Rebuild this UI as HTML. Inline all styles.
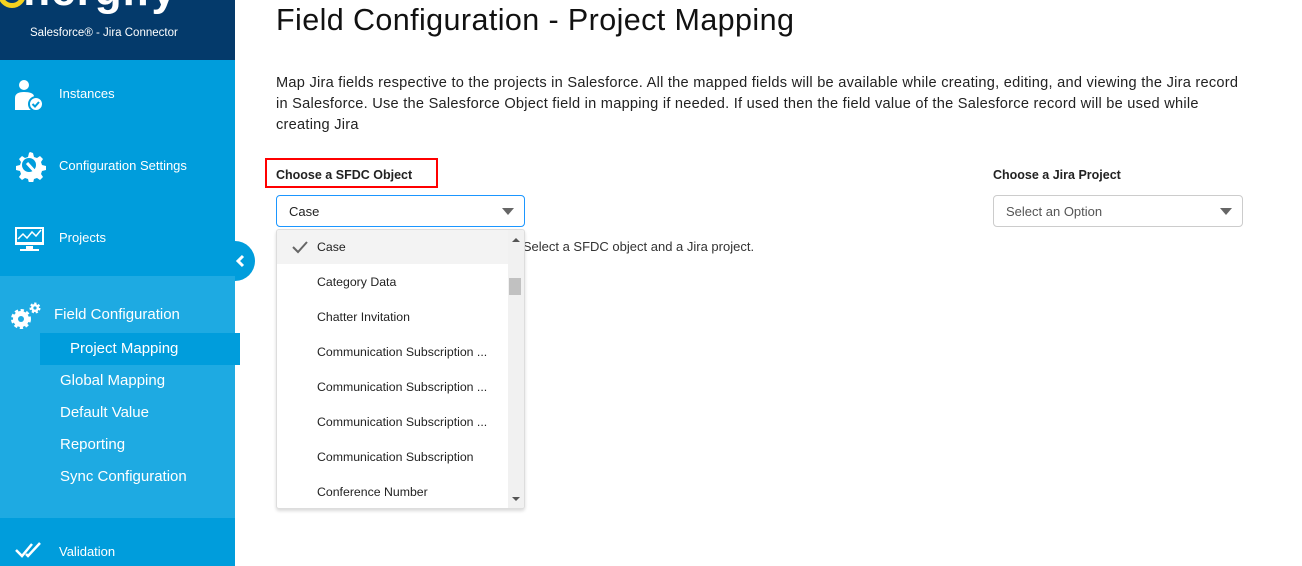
<!DOCTYPE html>
<html><head><meta charset="utf-8"><style>
*{margin:0;padding:0;box-sizing:border-box}
body{width:1302px;height:566px;overflow:hidden;background:#fff;font-family:"Liberation Sans",sans-serif;position:relative}
.sb{position:absolute;left:0;top:0;width:235px;height:566px;background:#009ddc}
.hd{position:absolute;left:0;top:0;width:235px;height:60px;background:#043a6b;overflow:hidden}
.logo{position:absolute;left:10px;top:-34px;font-size:44px;font-weight:bold;color:#fff;letter-spacing:1px}
.dot{position:absolute;left:-2px;top:-20px;width:28px;height:28px;border-radius:50%;border:5px solid #f4d21f}
.sub{position:absolute;left:30px;top:27px;font-size:11.5px;color:#fff}
.it{position:absolute;left:59px;color:#fff;font-size:13px}
.fc{position:absolute;left:0;top:276px;width:235px;height:242px;background:#1eaae2}
.s{position:absolute;left:60px;color:#fff;font-size:15px}
.act{position:absolute;left:40px;top:333px;width:200px;height:32px;background:#009ddc}
.coll{position:absolute;left:220px;top:241px;width:35px;height:40px;border-radius:0 20px 20px 0;background:#009ddc}
h1{position:absolute;left:276px;top:3px;font-size:30.5px;font-weight:normal;color:#111;letter-spacing:.4px}
.p{position:absolute;left:276px;top:73px;font-size:14.6px;letter-spacing:.25px;line-height:21px;color:#222;white-space:nowrap}
.lbl{position:absolute;font-size:12.5px;font-weight:bold;color:#222}
.sel{position:absolute;height:32px;border:1px solid #ccc;border-radius:4px;font-size:13px;color:#444;padding:8px 12px}
.tri{position:absolute;right:10px;top:12px;width:0;height:0;border-left:6px solid transparent;border-right:6px solid transparent;border-top:7px solid #666}
.dd{position:absolute;left:276px;top:229px;width:249px;height:280px;border:1px solid #ddd;border-radius:3px;background:#fff;box-shadow:0 2px 3px rgba(0,0,0,.15);overflow:hidden}
.o{position:absolute;left:40px;font-size:12.3px;color:#222}
</style></head><body>
<div class="sb"></div>
<div class="hd"><div class="dot"></div><div class="logo">&nbsp;nergify</div><div class="sub">Salesforce® - Jira Connector</div></div>
<svg style="position:absolute;left:14px;top:80px" width="32" height="32" viewBox="0 0 32 32"><circle cx="10" cy="5" r="5" fill="#fff"/><path d="M1 30V18q0-6 9-6t10 4v14z" fill="#fff"/><circle cx="22" cy="24" r="7" fill="#fff" stroke="#009ddc" stroke-width="2"/><path d="M18.5 24l2.5 2.5 4-4.5" stroke="#009ddc" stroke-width="2" fill="none"/></svg>
<div class="it" style="top:86px">Instances</div>
<svg style="position:absolute;left:14px;top:150px" width="32" height="32" viewBox="0 0 32 32"><path d="M16 2l3 1 1 4 3 1 3-2 3 3-2 3 1 3 4 1v4l-4 1-1 3 2 3-3 3-3-2-3 1-1 4h-4l-1-4-3-1-3 2-3-3 2-3-1-3-4-1v-4l4-1 1-3-2-3 3-3 3 2 3-1 1-4z" fill="#fff"/><circle cx="15" cy="15" r="7" fill="#009ddc"/><path d="M13 13l10 11" stroke="#fff" stroke-width="3"/></svg>
<div class="it" style="top:158px">Configuration Settings</div>
<svg style="position:absolute;left:14px;top:223px" width="32" height="30" viewBox="0 0 32 30"><rect x="1" y="4" width="29" height="18" fill="#fff"/><rect x="3" y="6" width="25" height="13" fill="#009ddc"/><path d="M4 16l5-5 4 4 5-6 4 4 5-6" stroke="#fff" stroke-width="1.5" fill="none"/><rect x="12" y="23" width="7" height="3" fill="#fff"/><rect x="6" y="26" width="19" height="2" fill="#fff"/></svg>
<div class="it" style="top:230px">Projects</div>
<div class="coll"></div>
<svg style="position:absolute;left:234px;top:254px" width="12" height="14" viewBox="0 0 12 14"><path d="M9 2L4 7l5 5" stroke="#fff" stroke-width="3" fill="none"/></svg>
<div class="fc"></div>
<div class="act"></div>
<svg style="position:absolute;left:9px;top:301px" width="34" height="30" viewBox="0 0 34 30"><circle cx="12" cy="18" r="8" fill="#fff" stroke="#fff" stroke-width="4" stroke-dasharray="3 2.3"/><circle cx="12" cy="18" r="3" fill="#1eaae2"/><circle cx="26" cy="7" r="4" fill="#fff" stroke="#fff" stroke-width="3" stroke-dasharray="2 1.6"/><circle cx="26" cy="7" r="1.6" fill="#1eaae2"/></svg>
<div class="s" style="left:54px;top:306px">Field Configuration</div>
<div class="s" style="left:70px;top:340px">Project Mapping</div>
<div class="s" style="top:372px">Global Mapping</div>
<div class="s" style="top:404px">Default Value</div>
<div class="s" style="top:436px">Reporting</div>
<div class="s" style="top:468px">Sync Configuration</div>
<svg style="position:absolute;left:14px;top:540px" width="34" height="20" viewBox="0 0 34 20"><path d="M2 10l6 6 10-12M12 14l2 2 12-13" stroke="#fff" stroke-width="2.5" fill="none"/></svg>
<div class="it" style="top:544px">Validation</div>

<h1>Field Configuration - Project Mapping</h1>
<div class="p">Map Jira fields respective to the projects in Salesforce. All the mapped fields will be available while creating, editing, and viewing the Jira record<br>in Salesforce. Use the Salesforce Object field in mapping if needed. If used then the field value of the Salesforce record will be used while<br>creating Jira</div>
<div style="position:absolute;left:265px;top:158px;width:173px;height:30px;border:2px solid #f00"></div>
<div class="lbl" style="left:276px;top:168px">Choose a SFDC Object</div>
<div class="sel" style="left:276px;top:195px;width:249px;border-color:#1b96ff;color:#222">Case<div class="tri"></div></div>
<div class="lbl" style="left:993px;top:168px">Choose a Jira Project</div>
<div class="sel" style="left:993px;top:195px;width:250px;color:#555">Select an Option<div class="tri"></div></div>
<div style="position:absolute;left:512px;top:239px;font-size:13px;color:#333">g Select a SFDC object and a Jira project.</div>
<div class="dd">
<div style="position:absolute;left:0;top:0;width:231px;height:34px;background:#f3f3f3"></div>
<svg style="position:absolute;left:15px;top:10px" width="16" height="14" viewBox="0 0 16 14"><path d="M1 7l5 5 9-10" stroke="#666" stroke-width="2" fill="none"/></svg>
<div class="o" style="top:10px">Case</div>
<div class="o" style="top:45px">Category Data</div>
<div class="o" style="top:80px">Chatter Invitation</div>
<div class="o" style="top:115px">Communication Subscription ...</div>
<div class="o" style="top:150px">Communication Subscription ...</div>
<div class="o" style="top:185px">Communication Subscription ...</div>
<div class="o" style="top:220px">Communication Subscription</div>
<div class="o" style="top:255px">Conference Number</div>
<div style="position:absolute;right:0;top:0;width:16px;height:280px;background:#f1f1f1"></div>
<div style="position:absolute;right:3px;top:48px;width:12px;height:17px;background:#c1c1c1"></div>
<div style="position:absolute;right:4px;top:8px;border-left:4px solid transparent;border-right:4px solid transparent;border-bottom:4px solid #555"></div>
<div style="position:absolute;right:4px;top:267px;border-left:4px solid transparent;border-right:4px solid transparent;border-top:4px solid #555"></div>
</div>
</body></html>
